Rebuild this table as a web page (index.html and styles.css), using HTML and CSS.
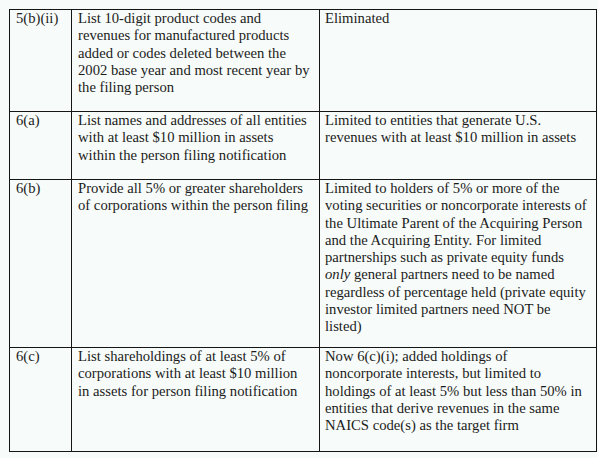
FILE: index.html
```html
<!DOCTYPE html>
<html lang="en">
<head>
<meta charset="utf-8">
<title>HSR form changes</title>
<link rel="stylesheet" href="styles.css">
</head>
<body>
<table class="changes">
  <colgroup>
    <col class="c-item">
    <col class="c-old">
    <col class="c-new">
  </colgroup>
  <tbody>
    <tr class="r1">
      <td>5(b)(ii)</td>
      <td>List 10-digit product codes and<br>revenues for manufactured products<br>added or codes deleted between the<br>2002 base year and most recent year by<br>the filing person</td>
      <td>Eliminated</td>
    </tr>
    <tr class="r2">
      <td>6(a)</td>
      <td>List names and addresses of all entities<br>with at least $10 million in assets<br>within the person filing notification</td>
      <td>Limited to entities that generate U.S.<br>revenues with at least $10 million in assets</td>
    </tr>
    <tr class="r3">
      <td>6(b)</td>
      <td>Provide all 5% or greater shareholders<br>of corporations within the person filing</td>
      <td>Limited to holders of 5% or more of the<br>voting securities or noncorporate interests of<br>the Ultimate Parent of the Acquiring Person<br>and the Acquiring Entity. For limited<br>partnerships such as private equity funds<br><em>only</em> general partners need to be named<br>regardless of percentage held (private equity<br>investor limited partners need NOT be<br>listed)</td>
    </tr>
    <tr class="r4">
      <td>6(c)</td>
      <td>List shareholdings of at least 5% of<br>corporations with at least $10 million<br>in assets for person filing notification</td>
      <td>Now 6(c)(i); added holdings of<br>noncorporate interests, but limited to<br>holdings of at least 5% but less than 50% in<br>entities that derive revenues in the same<br>NAICS code(s) as the target firm</td>
    </tr>
  </tbody>
</table>
</body>
</html>
```

FILE: styles.css
```css
html, body {
  margin: 0;
  background: #f7fbf9;
}
body {
  padding: 9px 0 0 9px;
  font-family: "Liberation Serif", "Times New Roman", serif;
  font-size: 14.67px;
  line-height: 17.3px;
  color: #1b1b1b;
}
.changes {
  border-collapse: collapse;
  table-layout: fixed;
  width: 587px;
}
.c-item { width: 62px; }
.c-old { width: 248px; }
.c-new { width: 277px; }
.changes td {
  border: 1px solid #151515;
  vertical-align: top;
  padding: 0 2px 0 6px;
  white-space: nowrap;
}
.changes td:last-child {
  padding-left: 5px;
}
.changes em {
  font-style: italic;
}
.r1 td { height: 101px; }
.r2 td { height: 67px; }
.r3 td { height: 167px; }
.r4 td { height: 103px; }
```
